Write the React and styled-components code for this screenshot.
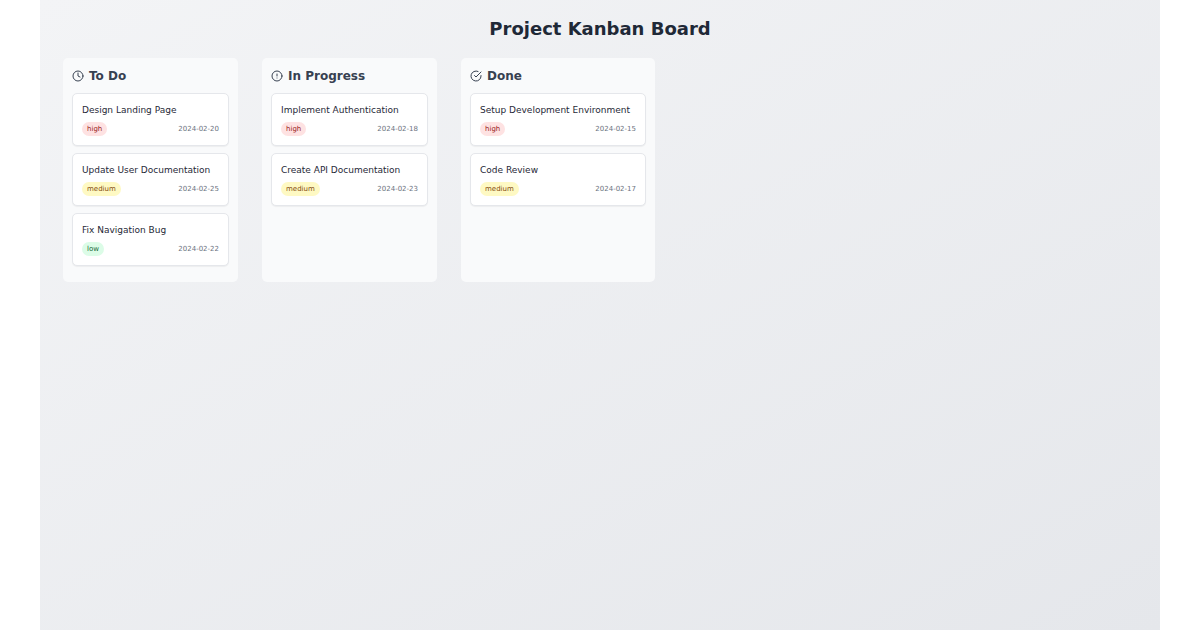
import React from 'react';
import styled, { createGlobalStyle } from 'styled-components'
import { FiClock, FiAlertCircle, FiCheckCircle } from 'react-icons/fi'

const GlobalStyle = createGlobalStyle `
    * {
        box-sizing: border-box;
        margin: 0;
        padding: 0;
    }
    body {
        background: #fff;
        padding: 0 40px;
        font-family: "DejaVu Sans", sans-serif;
    }
`

const priorities = {
    high: { background: '#fee2e2', color: '#991b1b' },
    medium: { background: '#fef9c3', color: '#854d0e' },
    low: { background: '#dcfce7', color: '#166534' },
}

const columns = [
    {
        title: 'To Do',
        icon: FiClock,
        tasks: [
            { title: 'Design Landing Page', priority: 'high', date: '2024-02-20' },
            { title: 'Update User Documentation', priority: 'medium', date: '2024-02-25' },
            { title: 'Fix Navigation Bug', priority: 'low', date: '2024-02-22' },
        ],
    },
    {
        title: 'In Progress',
        icon: FiAlertCircle,
        tasks: [
            { title: 'Implement Authentication', priority: 'high', date: '2024-02-18' },
            { title: 'Create API Documentation', priority: 'medium', date: '2024-02-23' },
        ],
    },
    {
        title: 'Done',
        icon: FiCheckCircle,
        wide: true,
        tasks: [
            { title: 'Setup Development Environment', priority: 'high', date: '2024-02-15' },
            { title: 'Code Review', priority: 'medium', date: '2024-02-17' },
        ],
    },
]

const Page = styled.main `
    min-height: 100vh;
    padding: 18px 23px;
    background: linear-gradient(to bottom right, #f3f4f6, #e5e7eb);
`

const Title = styled.h1 `
    margin-bottom: 18px;
    text-align: center;
    font-size: 18px;
    line-height: 22px;
    font-weight: 700;
    color: #1f2937;
`

const Board = styled.div `
    display: flex;
    gap: 24px;
`

const Column = styled.section `
    min-width: ${props => props.$wide ? '194px' : '175px'};
    padding: 9px;
    border-radius: 5px;
    background: #f9fafb;
`

const ColumnHeader = styled.div `
    display: flex;
    align-items: center;
    gap: 5px;
    margin-bottom: 8px;
    color: #374151;
`

const ColumnTitle = styled.h2 `
    font-size: 12px;
    line-height: 18px;
    font-weight: 700;
`

const Tasks = styled.ul `
    list-style: none;
`

const Card = styled.li `
    margin-bottom: 7px;
    padding: 9px;
    border: 1px solid #e5e7eb;
    border-radius: 5px;
    background: #fff;
    box-shadow: 0 1px 1px rgba(0, 0, 0, 0.05);
`

const CardTitle = styled.h3 `
    margin-bottom: 5px;
    font-size: 9px;
    line-height: 14px;
    font-weight: 400;
    white-space: nowrap;
    color: #1f2937;
`

const CardFooter = styled.div `
    display: flex;
    align-items: center;
    justify-content: space-between;
`

const Badge = styled.span `
    padding: 2px 5px;
    border-radius: 7px;
    font-size: 7px;
    line-height: 10px;
    background: ${props => priorities[props.$priority].background};
    color: ${props => priorities[props.$priority].color};
`

const DueDate = styled.time `
    font-size: 7px;
    line-height: 10px;
    color: #6b7280;
`

const Task = ({ item }) => {
    return (
        <Card>
            <CardTitle>{item.title}</CardTitle>
            <CardFooter>
                <Badge $priority={item.priority}>{item.priority}</Badge>
                <DueDate dateTime={item.date}>{item.date}</DueDate>
            </CardFooter>
        </Card>
    )
}

const App = () => {
    return (
        <Page>
            <GlobalStyle />
            <Title>Project Kanban Board</Title>
            <Board>
                {columns.map(({ title, icon: Icon, wide, tasks }) => (
                    <Column key={title} $wide={wide}>
                        <ColumnHeader>
                            <Icon size={12} aria-hidden="true" />
                            <ColumnTitle>{title}</ColumnTitle>
                        </ColumnHeader>
                        <Tasks>
                            {tasks.map(task => <Task key={task.title} item={task} />)}
                        </Tasks>
                    </Column>
                ))}
            </Board>
        </Page>
    )
}

export default App;
